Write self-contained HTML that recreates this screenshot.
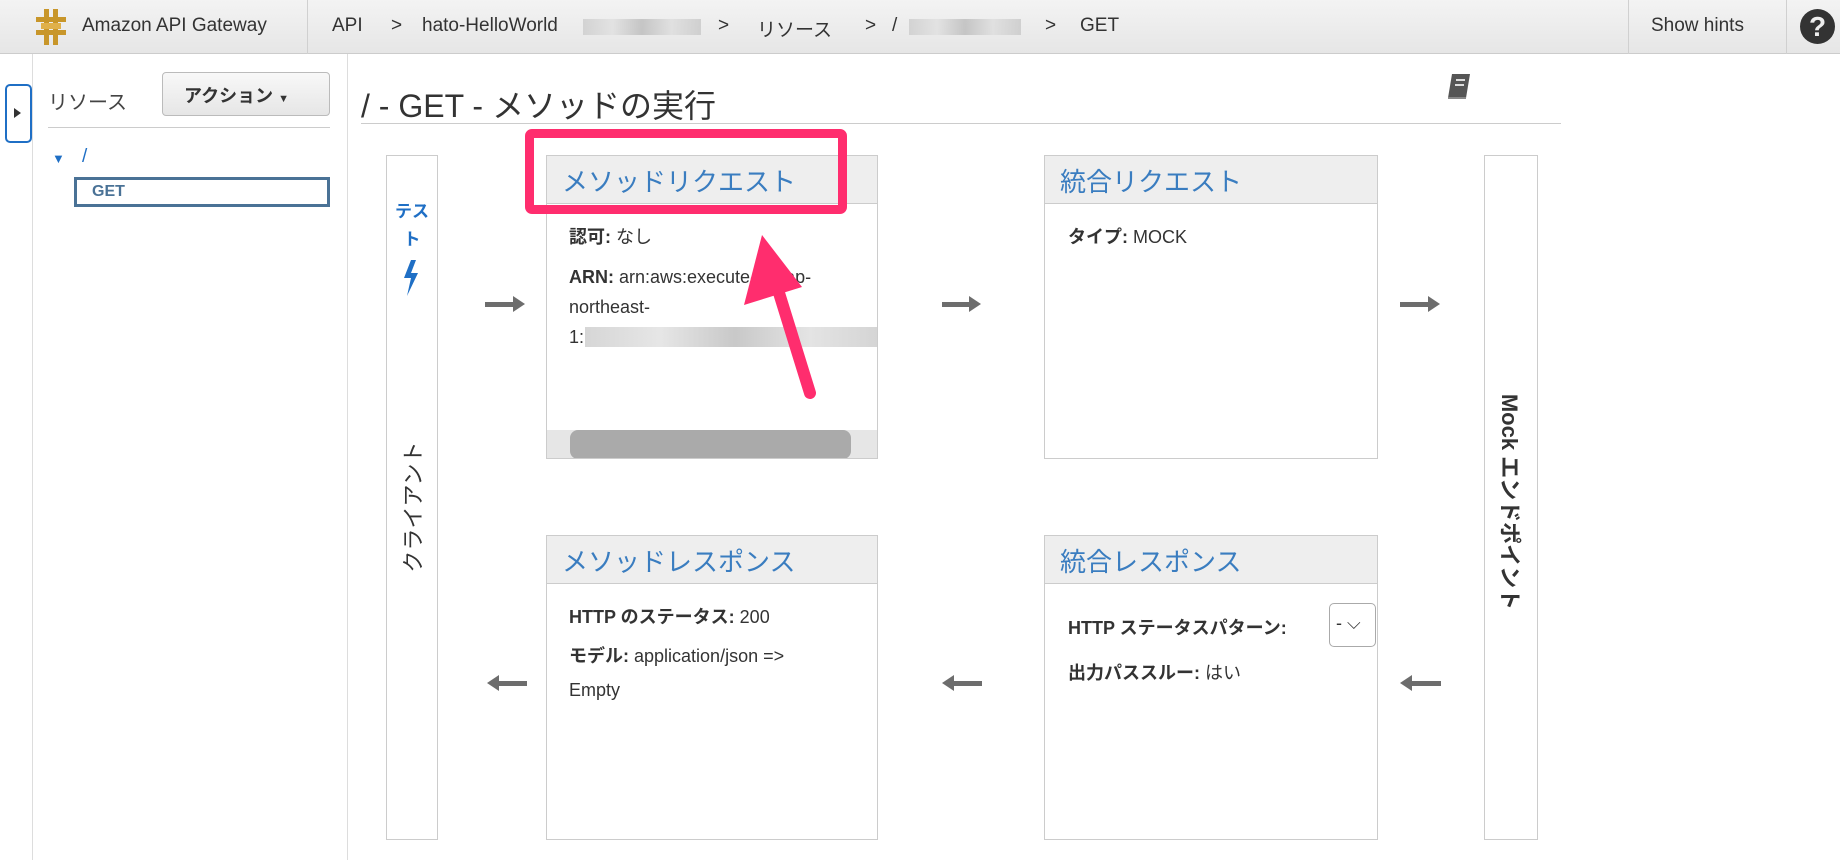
<!DOCTYPE html>
<html><head><meta charset="utf-8"><style>
*{box-sizing:border-box;margin:0;padding:0}
body{width:1840px;height:860px;overflow:hidden;background:#fff;font-family:"Liberation Sans","Noto Sans CJK JP",sans-serif;color:#333;position:relative}
.a{position:absolute}
.top{left:0;top:0;width:1840px;height:54px;background:linear-gradient(#f3f3f3,#e6e6e6);border-bottom:1px solid #ccc}
.tt{font-size:19px;color:#333;top:15px}
.vd{top:0;height:54px;width:1px;background:#d0d0d0}
.blur{background:linear-gradient(90deg,#ccc,#e0e0e0,#bbb,#ddd,#c8c8c8);height:16px;opacity:.8}
.box{border:1px solid #ccc;background:#fff}
.hd{position:absolute;left:0;top:0;right:0;height:48px;background:#eee;border-bottom:1px solid #ccc;color:#3a7dc0;font-size:26px;padding:6px 0 0 15px;white-space:nowrap}
.ln{font-size:18px;color:#333;white-space:nowrap}
.ln b{color:#333}
.arr{height:5px;background:#6d6d6d}
</style></head><body>
<div class="a top"></div>
<svg class="a" style="left:33px;top:8px" width="36" height="38" viewBox="0 0 36 38"><g fill="#c8962a"><rect x="11" y="1" width="5" height="36"/><rect x="20" y="1" width="5" height="36"/><rect x="3" y="9" width="30" height="5"/><rect x="3" y="22" width="30" height="5"/><rect x="8" y="15" width="20" height="6" fill="#e0b04a"/></g></svg>
<div class="a tt" style="left:82px">Amazon API Gateway</div>
<div class="a vd" style="left:307px"></div>
<div class="a tt" style="left:332px">API</div>
<div class="a tt" style="left:391px">&gt;</div>
<div class="a tt" style="left:422px">hato-HelloWorld</div>
<div class="a blur" style="left:583px;top:19px;width:118px"></div>
<div class="a tt" style="left:718px">&gt;</div>
<div class="a tt" style="left:757px">リソース</div>
<div class="a tt" style="left:865px">&gt;</div>
<div class="a tt" style="left:892px">/</div>
<div class="a blur" style="left:909px;top:19px;width:112px"></div>
<div class="a tt" style="left:1045px">&gt;</div>
<div class="a tt" style="left:1080px">GET</div>
<div class="a vd" style="left:1628px"></div>
<div class="a tt" style="left:1651px">Show hints</div>
<div class="a vd" style="left:1786px"></div>
<div class="a" style="left:1800px;top:9px;width:35px;height:35px;border-radius:50%;background:#333;color:#eee;font-weight:bold;font-size:28px;text-align:center;line-height:35px">?</div>

<div class="a" style="left:32px;top:54px;width:1px;height:806px;background:#ddd"></div>
<div class="a" style="left:5px;top:84px;width:27px;height:59px;border:2px solid #1f6fc5;border-radius:5px;background:#fff"></div>
<div class="a" style="left:14px;top:108px;border-left:7px solid #333;border-top:5px solid transparent;border-bottom:5px solid transparent"></div>

<div class="a" style="left:48px;top:86px;font-size:20px;color:#444">リソース</div>
<div class="a" style="left:162px;top:72px;width:168px;height:44px;border:1px solid #bbb;border-radius:4px;background:linear-gradient(#f8f8f8,#e6e6e6);font-size:18px;font-weight:bold;color:#333;padding:9px 0 0 21px;white-space:nowrap">アクション <span style="font-size:11px">▼</span></div>
<div class="a" style="left:48px;top:127px;width:282px;height:1px;background:#ccc"></div>
<div class="a" style="left:52px;top:151px;font-size:13px;color:#1f6fc5">▼</div>
<div class="a" style="left:82px;top:146px;font-size:19px;color:#1f6fc5">/</div>
<div class="a" style="left:74px;top:177px;width:256px;height:30px;border:3px solid #4a7296;font-size:16px;font-weight:bold;color:#4a7296;padding:3px 0 0 15px">GET</div>
<div class="a" style="left:347px;top:54px;width:1px;height:806px;background:#ddd"></div>

<div class="a" style="left:361px;top:81px;font-size:32px;color:#333;white-space:nowrap">/ - GET - メソッドの実行</div>
<div class="a" style="left:361px;top:123px;width:1200px;height:1px;background:#ccc"></div>
<svg class="a" style="left:1444px;top:72px" width="30" height="30" viewBox="0 0 30 30"><path d="M8 2h18l-4 24H4z" fill="#555"/><path d="M4 26h18" stroke="#888" stroke-width="2"/><rect x="12" y="7" width="9" height="2" fill="#ddd"/><rect x="11" y="12" width="9" height="2" fill="#ddd"/></svg>

<!-- client column -->
<div class="a box" style="left:386px;top:155px;width:52px;height:685px"></div>
<div class="a" style="left:392px;top:198px;width:40px;text-align:center;font-size:17px;font-weight:bold;color:#1f6fc5;line-height:28px">テス<br>ト</div>
<svg class="a" style="left:402px;top:260px" width="18" height="36" viewBox="0 0 18 36"><path d="M9 0L2 18h7L5 36 16 13H9L14 0z" fill="#1f6fc5"/></svg>
<div class="a" style="left:322px;top:491px;width:180px;text-align:center;font-size:22px;color:#333;white-space:nowrap;transform:rotate(-90deg)">クライアント</div>

<!-- mock column -->
<div class="a box" style="left:1484px;top:155px;width:54px;height:685px"></div>
<div class="a" style="left:1401px;top:486px;width:220px;text-align:center;font-size:22px;font-weight:bold;color:#333;white-space:nowrap;transform:rotate(90deg)">Mock エンドポイント</div>

<!-- method request -->
<div class="a box" style="left:546px;top:155px;width:332px;height:304px;overflow:hidden">
<div class="hd">メソッドリクエスト</div>
<div class="a ln" style="left:22px;top:67px"><b>認可:</b> なし</div>
<div class="a ln" style="left:22px;top:106px;line-height:30px"><b>ARN:</b> arn:aws:execute-api:ap-<br>northeast-<br>1:</div>
<div class="a blur" style="left:38px;top:171px;width:300px;height:20px"></div>
<div class="a" style="left:0;top:274px;width:332px;height:30px;background:#e6e6e6"></div>
<div class="a" style="left:23px;top:274px;width:281px;height:29px;background:#aaa;border-radius:8px"></div>
</div>
<div class="a" style="left:525px;top:129px;width:322px;height:85px;border:9px solid #ff2d6e;border-radius:7px"></div>
<svg class="a" style="left:730px;top:225px" width="100" height="180" viewBox="0 0 100 180"><path d="M80 168L45 55" stroke="#ff2d6e" stroke-width="12" stroke-linecap="round"/><path d="M32 10L14 80L72 62z" fill="#ff2d6e"/></svg>

<!-- integration request -->
<div class="a box" style="left:1044px;top:155px;width:334px;height:304px">
<div class="hd">統合リクエスト</div>
<div class="a ln" style="left:23px;top:67px"><b>タイプ:</b> MOCK</div>
</div>

<!-- method response -->
<div class="a box" style="left:546px;top:535px;width:332px;height:305px">
<div class="hd">メソッドレスポンス</div>
<div class="a ln" style="left:22px;top:67px"><b>HTTP のステータス:</b> 200</div>
<div class="a ln" style="left:22px;top:103px;line-height:34px"><b>モデル:</b> application/json =&gt;<br>Empty</div>
</div>

<!-- integration response -->
<div class="a box" style="left:1044px;top:535px;width:334px;height:305px">
<div class="hd">統合レスポンス</div>
<div class="a ln" style="left:23px;top:78px"><b>HTTP ステータスパターン:</b></div>
<div class="a" style="left:284px;top:67px;width:47px;height:44px;border:1px solid #aaa;border-radius:5px;font-size:18px;padding:9px 0 0 6px;background:#fff;white-space:nowrap">- ⌵</div>
<div class="a ln" style="left:23px;top:123px"><b>出力パススルー:</b> はい</div>
</div>

<!-- arrows -->
<div class="a arr" style="left:485px;top:302px;width:30px"></div><div class="a" style="left:513px;top:296px;border-left:12px solid #6d6d6d;border-top:8px solid transparent;border-bottom:8px solid transparent"></div>
<div class="a arr" style="left:942px;top:302px;width:29px"></div><div class="a" style="left:969px;top:296px;border-left:12px solid #6d6d6d;border-top:8px solid transparent;border-bottom:8px solid transparent"></div>
<div class="a arr" style="left:1400px;top:302px;width:30px"></div><div class="a" style="left:1428px;top:296px;border-left:12px solid #6d6d6d;border-top:8px solid transparent;border-bottom:8px solid transparent"></div>
<div class="a arr" style="left:497px;top:681px;width:30px"></div><div class="a" style="left:487px;top:675px;border-right:12px solid #6d6d6d;border-top:8px solid transparent;border-bottom:8px solid transparent"></div>
<div class="a arr" style="left:952px;top:681px;width:30px"></div><div class="a" style="left:942px;top:675px;border-right:12px solid #6d6d6d;border-top:8px solid transparent;border-bottom:8px solid transparent"></div>
<div class="a arr" style="left:1410px;top:681px;width:31px"></div><div class="a" style="left:1400px;top:675px;border-right:12px solid #6d6d6d;border-top:8px solid transparent;border-bottom:8px solid transparent"></div>
</body></html>
